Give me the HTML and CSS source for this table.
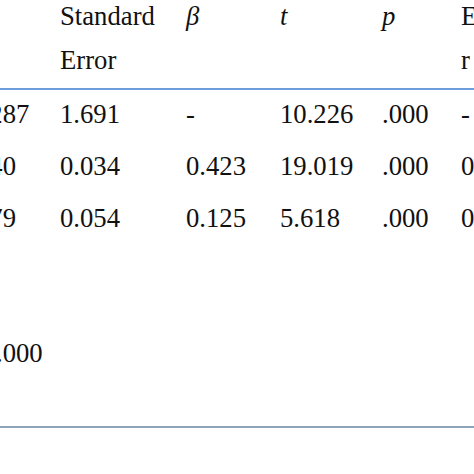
FILE: index.html
```html
<!DOCTYPE html>
<html>
<head>
<meta charset="utf-8">
<link rel="stylesheet" href="styles.css">
</head>
<body>
<table class="coef">
  <colgroup>
    <col class="c-b">
    <col class="c-se">
    <col class="c-beta">
    <col class="c-t">
    <col class="c-p">
    <col class="c-last">
  </colgroup>
  <thead>
    <tr>
      <th>B</th>
      <th>Standard<br>Error</th>
      <th><i>β</i></th>
      <th><i>t</i></th>
      <th><i>p</i></th>
      <th>Effect<br>r</th>
    </tr>
  </thead>
  <tbody>
    <tr class="first">
      <td>17.287</td>
      <td>1.691</td>
      <td>-</td>
      <td>10.226</td>
      <td>.000</td>
      <td>-</td>
    </tr>
    <tr>
      <td>0.640</td>
      <td>0.034</td>
      <td>0.423</td>
      <td>19.019</td>
      <td>.000</td>
      <td>0.423</td>
    </tr>
    <tr>
      <td>0.379</td>
      <td>0.054</td>
      <td>0.125</td>
      <td>5.618</td>
      <td>.000</td>
      <td>0.125</td>
    </tr>
    <tr class="note">
      <td colspan="6">.000</td>
    </tr>
  </tbody>
</table>
</body>
</html>
```
FILE: styles.css
```css
html, body {
  margin: 0;
  padding: 0;
  background: #fff;
  overflow: hidden;
  width: 474px;
  height: 474px;
}

.coef {
  border-collapse: collapse;
  table-layout: fixed;
  width: 607px;
  margin-left: -44px;
  margin-top: -6px;
  font-family: "Liberation Serif", "Times New Roman", serif;
  font-size: 26.7px;
  line-height: 44px;
  color: #111;
}

.c-b { width: 104px; }
.c-se { width: 126px; }
.c-beta { width: 94px; }
.c-t { width: 102px; }
.c-p { width: 79px; }
.c-last { width: 102px; }

.coef th,
.coef td {
  padding: 0;
  text-align: left;
  vertical-align: top;
  white-space: nowrap;
  font-weight: normal;
}

.coef thead th {
  padding-bottom: 6px;
  border-bottom: 2px solid #6e9ddb;
}

.coef tbody td {
  padding-top: 8px;
}

.coef tbody tr.first td {
  padding-top: 2px;
}

.coef tbody tr.note td {
  padding-top: 91px;
  padding-bottom: 51px;
  padding-left: 40px;
  border-bottom: 2px solid #8ea2b8;
}
```
